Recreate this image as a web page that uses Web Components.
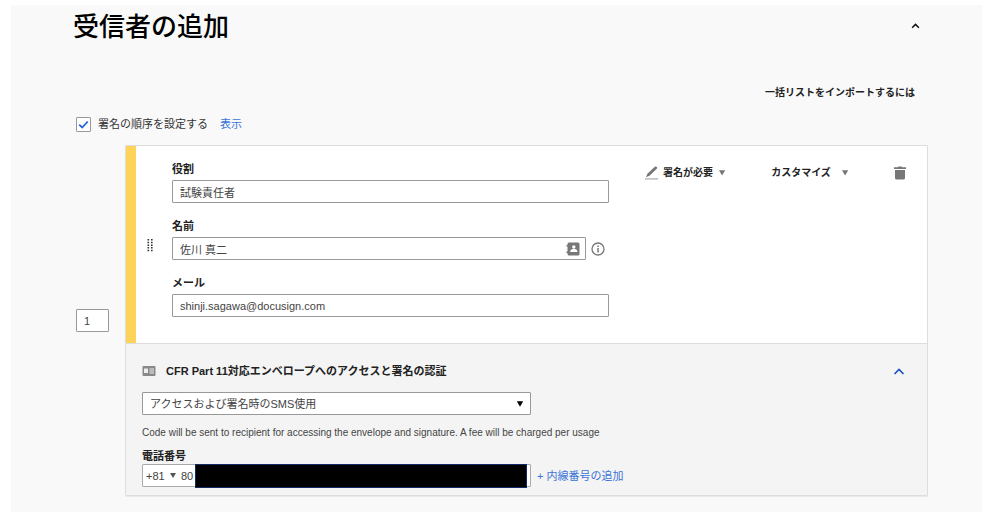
<!DOCTYPE html>
<html lang="ja">
<head>
<meta charset="utf-8">
<title>受信者の追加</title>
<style>
  body {
    margin: 0;
    padding: 5px 18px 14px 11px;
    background: #fff;
    color: #222;
    font: 11px/16px "Liberation Sans", "Noto Sans CJK JP", sans-serif;
  }
</style>
</head>
<body>
<recipients-panel></recipients-panel>

<script>
const base = `
  *, *::before { box-sizing: border-box; }
  svg { display: block; flex: none; }
  button, input, select { font: inherit; color: inherit; margin: 0; }
  button { padding: 0; border: 0; background: none; display: flex; align-items: center; }
  a { color: #3b73d9; text-decoration: none; }
  label { font-weight: bold; color: #222; }
`;

function define(name, html) {
  customElements.define(name, class extends HTMLElement {
    connectedCallback() {
      if (this.shadowRoot) return;
      const t = document.createElement('template');
      t.innerHTML = html(this);
      this.attachShadow({ mode: 'open' }).append(t.content.cloneNode(true));
    }
  });
}

define('chevron-up', el => `
  <style>${base}
    :host { display: block; }
  </style>
  <button type="button" aria-label="折りたたむ">
    <svg width="${el.getAttribute('size')}" height="${el.getAttribute('size')}" viewBox="0 0 12 12">
      <path d="M1.500 9 6 4.500l4.500 4.500" fill="none" stroke="currentColor" stroke-width="${el.getAttribute('weight')}"/>
    </svg>
  </button>`);

define('text-field', el => `
  <style>${base}
    :host { display: block; }
    label { display: block; margin-bottom: 3px; }
    .row { display: flex; align-items: center; gap: 5px; }
    .box { flex: 1; min-width: 0; height: 23px; display: flex; align-items: center; padding: 0 5px 0 7px;
           border: 1px solid #999; border-radius: 1px; background: #fff; }
    input { flex: 1; min-width: 0; height: 21px; border: 0; padding: 0; background: none; outline: 0; color: #444; }
  </style>
  <label for="f">${el.getAttribute('label')}</label>
  <div class="row">
    <div class="box"><input id="f" type="text" value="${el.getAttribute('value')}"><slot name="inside"></slot></div>
    <slot name="after"></slot>
  </div>`);

define('menu-button', () => `
  <style>${base}
    :host { display: block; }
    button { height: 24px; gap: 5px; font-size: 10px; font-weight: bold; white-space: nowrap; }
    ::slotted(svg) { display: block; }
    .arrow { margin-left: var(--arrow-gap, 0); }
  </style>
  <button type="button"><slot></slot>
    <svg class="arrow" width="8" height="8" viewBox="0 0 8 8"><path d="M1 1.300h6.200L4.100 6.600z" fill="#777"/></svg>
  </button>`);

define('recipient-form', () => `
  <style>${base}
    :host { display: flex; border-left: 10px solid #fdd459; background: #fff; }
    .handle { width: 36px; display: flex; align-items: center; padding-left: 11px; }
    .content { flex: 1; min-width: 0; display: flex; gap: 36px; padding: 15px 21px 26px 0; }
    .fields { flex: 0 1 437px; min-width: 0; display: grid; gap: 15px; }
    .actions { flex: 1; height: 24px; display: flex; align-items: center; justify-content: space-between; }
    .customize { --arrow-gap: 5px; }
  </style>
  <div class="handle">
    <svg width="6" height="14" viewBox="0 0 6 14" fill="#333">
      <path d="M.5 1h1.600v1.500H.5zm3.500 0h1.600v1.500H4zM.5 3.700h1.600v1.500H.5zm3.500 0h1.600v1.500H4zM.5 6.400h1.600v1.500H.5zm3.500 0h1.600v1.500H4zM.5 9.100h1.600v1.500H.5zm3.500 0h1.600v1.500H4zM.5 11.800h1.600v1.500H.5zm3.500 0h1.600v1.500H4z"/>
    </svg>
  </div>
  <div class="content">
    <div class="fields">
      <text-field label="役割" value="試験責任者"></text-field>
      <text-field label="名前" value="佐川 真二">
        <svg slot="inside" width="14" height="14" viewBox="0 0 14 14">
          <path d="M3 .5h9a1.500 1.500 0 0 1 1.500 1.500v10a1.500 1.500 0 0 1-1.500 1.500H3A1.500 1.500 0 0 1 1.500 12v-1H.5V9.500h1v-5h-1V3h1V2A1.500 1.500 0 0 1 3 .5z" fill="#777"/>
          <circle cx="7.800" cy="5" r="1.700" fill="#fff"/>
          <path d="M4.300 10V9c0-1.500 2-2 3.500-2s3.500.5 3.500 2v1z" fill="#fff"/>
        </svg>
        <svg slot="after" width="14" height="14" viewBox="0 0 14 14" style="margin-right:4px">
          <circle cx="7" cy="7" r="6" fill="none" stroke="#777" stroke-width="1.300"/>
          <path d="M6.300 3.500h1.500V5H6.300zm0 2.500h1.500v4.500H6.300z" fill="#777"/>
        </svg>
      </text-field>
      <text-field label="メール" value="shinji.sagawa@docusign.com"></text-field>
    </div>
    <div class="actions">
      <menu-button>
        <svg width="13" height="14" viewBox="0 0 13 14">
          <path d="M9.800.8c.6-.6 1.600-.3 2 .1s.5 1.200 0 1.800L4.500 9.800 1 11.200l1.400-3.400z" fill="#777"/>
          <path d="M0 12.300h13v1.200H0z" fill="#aaa"/>
        </svg>署名が必要</menu-button>
      <menu-button class="customize">カスタマイズ</menu-button>
      <button type="button" aria-label="削除">
        <svg width="12" height="14" viewBox="0 0 12 14" fill="#777">
          <path d="M0 1.300h3.500L4.500.5h3l1 .8H12V3H0zM1 4h10v8a1.500 1.500 0 0 1-1.500 1.500h-7A1.500 1.500 0 0 1 1 12z"/>
        </svg>
      </button>
    </div>
  </div>`);

define('access-auth', () => `
  <style>${base}
    :host { display: block; padding: 19px 22px 8px 16px; border-top: 1px solid #ddd; background: #f4f4f4; }
    header { display: flex; align-items: center; gap: 10px; }
    h2 { flex: 1; margin: 0; font: inherit; font-weight: bold; color: #222; }
    chevron-up { color: #1c50c0; }
    .pick { display: grid; align-items: center; justify-items: end; }
    .pick > * { grid-area: 1 / 1; }
    .pick svg { pointer-events: none; }
    select { appearance: none; width: 100%; height: 23px; border: 0; background: none; outline: 0; color: #444; }
    .method { max-width: 389px; margin-top: 13px; }
    .method select { padding: 0 24px 0 7px; border: 1px solid #999; border-radius: 1px; background: #fff; }
    .method svg { margin-right: 7px; }
    p { margin: 10px 0 7px; font-size: 10px; color: #444; }
    label { display: block; width: max-content; }
    .line { display: flex; align-items: center; gap: 6px; }
    .phone { flex: 0 1 389px; min-width: 0; height: 23px; display: flex; align-items: center;
             border: 1px solid #aaa; border-radius: 1px; background: #fff; }
    .phone select { padding: 0 12px 0 3px; }
    .phone input { width: 14px; height: 21px; margin-left: 4px; padding: 0; border: 0; background: none; outline: 0; color: #444; }
    .mask { flex: 1; height: 24px; margin-right: 3px; border: 1px solid #102a66; background: #000; }
  </style>
  <header>
    <svg width="14" height="12" viewBox="0 0 14 12">
      <rect x=".5" y="1" width="13" height="10" rx="1" fill="#888"/>
      <path d="M2 3.500h4v4.500H2zM7.500 3.500H12v1H7.500zm0 2H12v1H7.500zm0 2H12v1H7.500z" fill="#eee"/>
    </svg>
    <h2>CFR Part 11対応エンベロープへのアクセスと署名の認証</h2>
    <chevron-up size="12" weight="1.700"></chevron-up>
  </header>
  <div class="pick method">
    <select aria-label="認証方法"><option>アクセスおよび署名時のSMS使用</option></select>
    <svg width="8" height="8" viewBox="0 0 8 8"><path d="M.8 1.300h6.400L4 6.800z" fill="#000"/></svg>
  </div>
  <p>Code will be sent to recipient for accessing the envelope and signature. A fee will be charged per usage</p>
  <label for="tel">電話番号</label>
  <div class="line">
    <div class="phone">
      <div class="pick">
        <select aria-label="国番号"><option>+81</option></select>
        <svg width="8" height="8" viewBox="0 0 8 8"><path d="M1 1h6L4 6z" fill="#555"/></svg>
      </div>
      <input id="tel" type="tel" value="80">
      <div class="mask"></div>
    </div>
    <a href="#">+ 内線番号の追加</a>
  </div>`);

define('recipient-card', () => `
  <style>${base}
    :host { display: flex; align-items: center; gap: 16px; }
    .order { width: 33px; height: 23px; padding: 0 7px; border: 1px solid #999; border-radius: 1px; background: #fff; color: #444; outline: 0; }
    article { flex: 1; min-width: 0; border: 1px solid #ddd; border-radius: 1px; box-shadow: 0 1px 1px #0001; }
  </style>
  <input class="order" type="text" value="1" aria-label="署名の順序">
  <article><recipient-form></recipient-form><access-auth></access-auth></article>`);

define('order-toggle', () => `
  <style>${base}
    :host { display: flex; align-items: center; gap: 12px; }
    label { display: flex; align-items: center; gap: 7px; font-weight: normal; color: #333; }
    .check { display: grid; place-items: center; }
    .check > * { grid-area: 1 / 1; }
    input { appearance: none; width: 15px; height: 15px; border: 1px solid #999; border-radius: 1px; background: #fff; }
    svg { pointer-events: none; visibility: hidden; }
    input:checked + svg { visibility: visible; }
  </style>
  <label><span class="check"><input type="checkbox" checked>
    <svg width="11" height="11" viewBox="0 0 11 11"><path d="M1.200 5.700 4.200 8.500 9.800 2.500" fill="none" stroke="#2463e0" stroke-width="1.800"/></svg>
  </span><span>署名の順序を設定する</span></label>
  <a href="#">表示</a>`);

define('recipients-panel', () => `
  <style>${base}
    :host { display: block; padding: 0 54px 16px 65px; background: #f9f9f9; }
    header { display: flex; align-items: center; justify-content: space-between; height: 40px; padding-right: 8px; }
    h1 { margin: 0 0 0 -3px; font: 500 26px/38px "Noto Sans CJK JP", sans-serif; color: #000; }
    chevron-up { color: #111; }
    .bulk { display: flex; justify-content: flex-end; padding: 40px 13px 15px 0; font-size: 10px; }
    .bulk a { color: #222; font-weight: bold; }
    recipient-card { margin-top: 13px; }
  </style>
  <header><h1>受信者の追加</h1><chevron-up size="9" weight="2"></chevron-up></header>
  <div class="bulk"><a href="#">一括リストをインポートするには</a></div>
  <order-toggle></order-toggle>
  <recipient-card></recipient-card>`);
</script>
</body>
</html>
